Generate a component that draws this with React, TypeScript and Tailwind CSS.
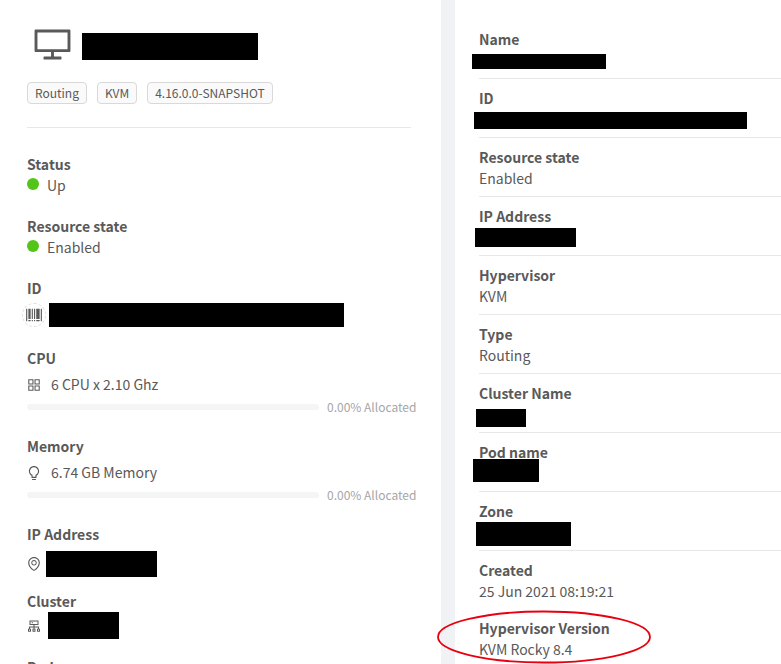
import React from "react";
import { AiOutlineDesktop, AiOutlineBarcode, AiOutlineAppstore, AiOutlineBulb, AiOutlineEnvironment, AiOutlineCluster } from "react-icons/ai";

const Label = ({ children }: { children: React.ReactNode }) => (
  <div className="font-semibold leading-[21px] text-[#595959]">{children}</div>
);

const Tag = ({ children }: { children: React.ReactNode }) => (
  <span className="h-[22px] px-[7px] border border-[#d9d9d9] rounded-[4px] bg-[#fafafa] text-[12px] leading-[20px] text-[#595959]">{children}</span>
);

const Bar = () => (
  <div className="flex items-center h-[21px] mt-[1px]">
    <div className="w-[292px] h-[6px] shrink-0 rounded-full bg-[#f5f5f5]" />
    <span className="ml-[8px] text-[12px] text-[#a6a6a6] leading-[21px] whitespace-nowrap">0.00% Allocated</span>
  </div>
);

const Row = ({ label, value, box, last }: { label: string; value?: string; box?: string; last?: boolean }) => (
  <div className={`pt-[9px] ${last ? "h-[58px]" : "h-[59px] border-b border-[#e8e8e8]"}`}>
    <Label>{label}</Label>
    {value && <div className="leading-[21px] text-[#595959]">{value}</div>}
    {box && <div className={`bg-black ${box}`} />}
  </div>
);

export default function App() {
  return (
    <div className="relative flex w-[781px] h-[664px] overflow-hidden bg-white text-[14px] text-[#595959] font-['Noto_Sans_CJK_SC','Noto_Sans',sans-serif]">
      <section className="w-[441px] shrink-0 px-[27px] pt-[29px]">
        <div className="flex items-center h-[31px]">
          <AiOutlineDesktop className="ml-[5px] text-[41px] text-[#595959] shrink-0" />
          <div className="ml-[9px] mt-[4px] w-[176px] h-[27px] bg-black" />
        </div>
        <div className="flex gap-[10px] mt-[22px]">
          <Tag>Routing</Tag>
          <Tag>KVM</Tag>
          <Tag>4.16.0.0-SNAPSHOT</Tag>
        </div>
        <div className="w-[384px] h-px bg-[#e8e8e8] mt-[23px]" />

        <div className="mt-[26px]"><Label>Status</Label></div>
        <div className="flex items-center h-[21px]">
          <span className="w-[12px] h-[12px] rounded-full bg-[#52c41a] -mt-[4px]" />
          <span className="ml-[8px]">Up</span>
        </div>

        <div className="mt-[20px]"><Label>Resource state</Label></div>
        <div className="flex items-center h-[21px]">
          <span className="w-[12px] h-[12px] rounded-full bg-[#52c41a] -mt-[4px]" />
          <span className="ml-[8px]">Enabled</span>
        </div>

        <div className="mt-[20px]"><Label>ID</Label></div>
        <div className="flex items-center h-[24px] mt-[4px]">
          <span className="flex items-center justify-center -ml-[5px] w-[24px] h-[24px] rounded-full border border-dashed border-[#e0e0e0] shrink-0">
            <AiOutlineBarcode className="text-[18px] text-[#595959]" />
          </span>
          <div className="ml-[3px] w-[295px] h-[24px] bg-black" />
        </div>

        <div className="mt-[21px]"><Label>CPU</Label></div>
        <div className="flex items-center h-[21px] mt-[5px]">
          <AiOutlineAppstore className="-ml-[1px] text-[16px] text-[#595959] shrink-0" />
          <span className="ml-[9px]">6 CPU x 2.10 Ghz</span>
        </div>
        <Bar />

        <div className="mt-[19px]"><Label>Memory</Label></div>
        <div className="flex items-center h-[21px] mt-[5px]">
          <AiOutlineBulb className="-ml-[1px] text-[16px] text-[#595959] shrink-0" />
          <span className="ml-[9px]">6.74 GB Memory</span>
        </div>
        <Bar />

        <div className="mt-[19px]"><Label>IP Address</Label></div>
        <div className="flex items-center h-[26px] mt-[6px]">
          <AiOutlineEnvironment className="-ml-[1px] text-[16px] text-[#595959] shrink-0" />
          <div className="ml-[4px] w-[111px] h-[26px] bg-black" />
        </div>

        <div className="mt-[14px]"><Label>Cluster</Label></div>
        <div className="flex items-center h-[27px]">
          <AiOutlineCluster className="-ml-[1px] text-[16px] text-[#595959] shrink-0" />
          <div className="ml-[6px] w-[71px] h-[27px] bg-black" />
        </div>

        <div className="mt-[18px]"><Label>Pod</Label></div>
      </section>

      <div className="w-[14px] shrink-0 bg-[#f0f2f5]" />

      <section className="flex-1 pl-[24px] pt-[20px]">
        <Row label="Name" box="w-[134px] h-[15px] -ml-[7px] mt-[4px]" />
        <Row label="ID" box="w-[273px] h-[17px] -ml-[5px] mt-[3px]" />
        <Row label="Resource state" value="Enabled" />
        <Row label="IP Address" box="w-[101px] h-[19px] -ml-[4px] mt-[1px]" />
        <Row label="Hypervisor" value="KVM" />
        <Row label="Type" value="Routing" />
        <Row label="Cluster Name" box="w-[50px] h-[18px] -ml-[3px] mt-[5px]" />
        <Row label="Pod name" box="w-[66px] h-[23px] -ml-[6px] -mt-[4px]" />
        <Row label="Zone" box="w-[95px] h-[24px] -ml-[3px]" />
        <Row label="Created" value="25 Jun 2021 08:19:21" last />
        <Row label="Hypervisor Version" value="KVM Rocky 8.4" last />
      </section>

      <svg className="absolute left-[436px] top-[609px]" width="216" height="55" viewBox="0 0 216 55" fill="none">
        <ellipse cx="108" cy="28" rx="106" ry="25.5" stroke="#e8000f" strokeWidth="1.8" />
      </svg>
    </div>
  );
}
